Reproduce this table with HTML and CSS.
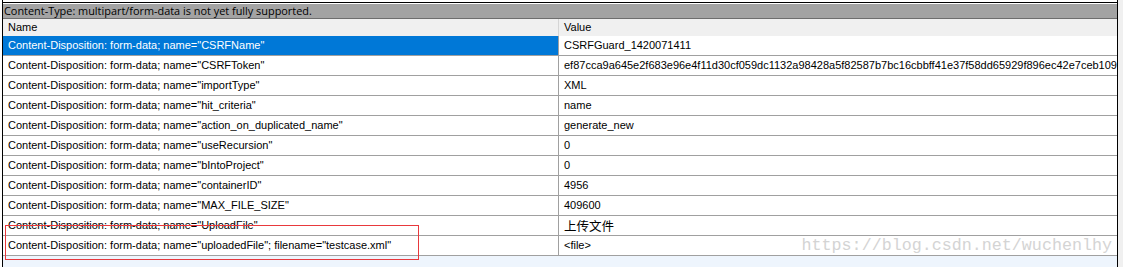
FILE: index.html
```html
<!DOCTYPE html>
<html lang="en">
  <head>
    <meta charset="UTF-8" />
    <title>Fiddler - WebForms</title>
    <link rel="stylesheet" href="styles.css">
  </head>
  <body>
    <div class="window">
      <div class="top-box"></div>
      <div class="notice">Content-Type: multipart/form-data is not yet fully supported.</div>

      <div class="grid">
        <div class="row head">
          <div class="cell name">Name</div>
          <div class="cell value">Value</div>
        </div>
        <div class="row">
          <div class="cell name selected">Content-Disposition: form-data; name="CSRFName"</div>
          <div class="cell value">CSRFGuard_1420071411</div>
        </div>
        <div class="row">
          <div class="cell name">Content-Disposition: form-data; name="CSRFToken"</div>
          <div class="cell value">ef87cca9a645e2f683e96e4f11d30cf059dc1132a98428a5f82587b7bc16cbbff41e37f58dd65929f896ec42e7ceb1098</div>
        </div>
        <div class="row">
          <div class="cell name">Content-Disposition: form-data; name="importType"</div>
          <div class="cell value">XML</div>
        </div>
        <div class="row">
          <div class="cell name">Content-Disposition: form-data; name="hit_criteria"</div>
          <div class="cell value">name</div>
        </div>
        <div class="row">
          <div class="cell name">Content-Disposition: form-data; name="action_on_duplicated_name"</div>
          <div class="cell value">generate_new</div>
        </div>
        <div class="row">
          <div class="cell name">Content-Disposition: form-data; name="useRecursion"</div>
          <div class="cell value">0</div>
        </div>
        <div class="row">
          <div class="cell name">Content-Disposition: form-data; name="bIntoProject"</div>
          <div class="cell value">0</div>
        </div>
        <div class="row">
          <div class="cell name">Content-Disposition: form-data; name="containerID"</div>
          <div class="cell value">4956</div>
        </div>
        <div class="row">
          <div class="cell name">Content-Disposition: form-data; name="MAX_FILE_SIZE"</div>
          <div class="cell value">409600</div>
        </div>
        <div class="row">
          <div class="cell name">Content-Disposition: form-data; name="UploadFile"</div>
          <div class="cell value cjk">上传文件</div>
        </div>
        <div class="row">
          <div class="cell name">Content-Disposition: form-data; name="uploadedFile"; filename="testcase.xml"</div>
          <div class="cell value">&lt;file&gt;</div>
        </div>
        <div class="empty"></div>

        <!-- annotation drawn over the screenshot -->
        <div class="highlight"></div>
        <div class="watermark">https://blog.csdn.net/wuchenlhy</div>
      </div>
    </div>
    <div class="gutter"></div>
  </body>
</html>
```

FILE: styles.css
```css
:root {
  --grid-line: #a0a0a0;
  --header-bg: #f0f0f0;
  --select-bg: #0078d7;
  --empty-bg: #eef5fd;
}

* {
  margin: 0;
  padding: 0;
  box-sizing: border-box;
}

body {
  display: flex;
  height: 267px;
  overflow: hidden;
  background: #ffffff;
  font-family: "Liberation Sans", sans-serif;
  color: #000000;
}

.window {
  width: 1116px;
  margin-left: 2px;
  border-left: 1px solid #000000;
  border-right: 1px solid #000000;
  display: flex;
  flex-direction: column;
}

.gutter {
  flex: 1;
  background: #f0f0f0;
}

.top-box {
  height: 3px;
  border-bottom: 1px solid #000000;
  margin-bottom: 1px;
}

.notice {
  height: 14px;
  background: #a3a3a3;
  font-family: "Open Sans", sans-serif;
  font-size: 10.9px;
  line-height: 14px;
  padding-left: 1px;
  white-space: nowrap;
}

.grid {
  position: relative;
  flex: 1;
  display: flex;
  flex-direction: column;
  overflow: hidden;
}

.row {
  display: grid;
  grid-template-columns: 556px 1fr;
  height: 20px;
  border-bottom: 1px solid var(--grid-line);
}

.row.head {
  height: 18px;
  border-top: 1px solid #6e6e6e;
  border-bottom: none;
  background: var(--header-bg);
}

.cell {
  font-family: "Liberation Sans", sans-serif;
  font-size: 11px;
  line-height: 19px;
  padding-left: 5px;
  white-space: nowrap;
  overflow: hidden;
}

.head .cell {
  line-height: 16px;
}

.cell.name {
  border-right: 1px solid var(--grid-line);
}

.head .cell.name {
  border-right-color: #d5d5d5;
}

.cell.selected {
  background: var(--select-bg);
  color: #ffffff;
}

.cell.cjk {
  font-family: "Noto Sans CJK SC", sans-serif;
  font-size: 12.5px;
}

.empty {
  flex: 1;
  background: var(--empty-bg);
}

.highlight {
  position: absolute;
  left: 2px;
  top: 207px;
  width: 414px;
  height: 35px;
  border: 1px solid #e8393d;
}

.watermark {
  position: absolute;
  right: 5px;
  top: 218px;
  font-family: "Liberation Mono", monospace;
  font-size: 16.7px;
  line-height: 20px;
  color: #d4d4d4;
  white-space: nowrap;
}
```
